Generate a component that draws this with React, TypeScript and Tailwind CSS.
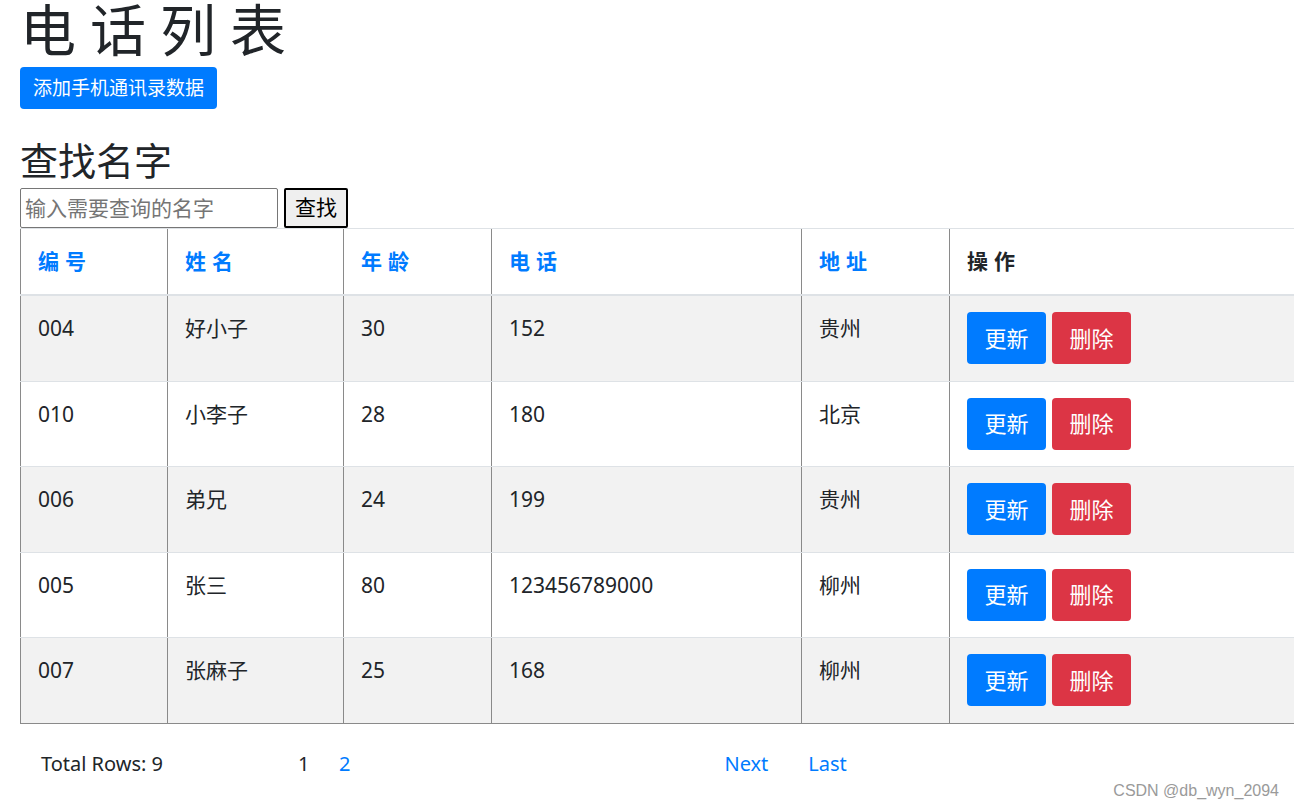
import React from "react";

const FONT = { fontFamily: '"Noto Sans", "Noto Sans CJK SC", sans-serif' };

const rows = [
  { id: "004", name: "好小子", age: "30", phone: "152", addr: "贵州" },
  { id: "010", name: "小李子", age: "28", phone: "180", addr: "北京" },
  { id: "006", name: "弟兄", age: "24", phone: "199", addr: "贵州" },
  { id: "005", name: "张三", age: "80", phone: "123456789000", addr: "柳州" },
  { id: "007", name: "张麻子", age: "25", phone: "168", addr: "柳州" },
];

const COLS = "grid grid-cols-[147px_176px_148px_310px_148px_1fr]";

function HeadCell({ children, last }: { children: React.ReactNode; last?: boolean }) {
  return (
    <div
      className={`border-l border-[#8a8a8a] px-[17px] flex items-center text-[21px] font-bold tracking-[6px] ${
        last ? "text-[#212529]" : "text-[#007bff]"
      }`}
    >
      {children}
    </div>
  );
}

function Cell({ children }: { children: React.ReactNode }) {
  return <div className="border-l border-[#8a8a8a] px-[17px] pt-[18px] text-[21px] leading-[28px] text-[#212529]">{children}</div>;
}

export default function App() {
  return (
    <div className="w-[1294px] h-[812px] overflow-hidden bg-white relative" style={FONT}>
      <div className="pl-5">
        <h1 className="text-[56px] leading-[67px] tracking-[14px] text-[#212529] mt-[-4px]">电话列表</h1>
        <button className="mt-[4px] h-[42px] px-[13px] rounded bg-[#007bff] text-white text-[19px]">
          添加手机通讯录数据
        </button>
        <h2 className="mt-[24px] text-[38px] leading-[55px] text-[#212529]">查找名字</h2>
        <div className="flex items-center gap-[6px]">
          <input
            className="w-[258px] h-[40px] border border-[#767676] rounded-[2px] px-[4px] text-[21px] placeholder:text-[#757575] outline-none"
            placeholder="输入需要查询的名字"
          />
          <button className="h-[40px] px-[9px] border-2 border-black bg-[#efefef] rounded-[2px] text-[21px] text-black">
            查找
          </button>
        </div>
      </div>

      <div className="ml-5 border-t border-[#dee2e6]">
        <div className={`${COLS} h-[67px] border-b-2 border-[#dee2e6]`}>
          <HeadCell>编号</HeadCell>
          <HeadCell>姓名</HeadCell>
          <HeadCell>年龄</HeadCell>
          <HeadCell>电话</HeadCell>
          <HeadCell>地址</HeadCell>
          <HeadCell last>操作</HeadCell>
        </div>
        {rows.map((r, i) => (
          <div
            key={r.id}
            className={`${COLS} h-[85.5px] ${i % 2 === 0 ? "bg-[#f2f2f2]" : "bg-white"} ${
              i < rows.length - 1 ? "border-b border-[#dee2e6]" : "border-b border-[#8a8a8a]"
            }`}
          >
            <Cell>{r.id}</Cell>
            <Cell>{r.name}</Cell>
            <Cell>{r.age}</Cell>
            <Cell>{r.phone}</Cell>
            <Cell>{r.addr}</Cell>
            <div className="border-l border-[#8a8a8a] pl-[17px] pt-[16px] flex items-start gap-[6px]">
              <button className="w-[79px] h-[52px] rounded bg-[#007bff] text-white text-[22px]">更新</button>
              <button className="w-[79px] h-[52px] rounded bg-[#dc3545] text-white text-[22px]">删除</button>
            </div>
          </div>
        ))}
      </div>

      <div className="flex items-center h-[80px] text-[20px] text-[#212529]">
        <span className="ml-[41px] w-[257px]">Total Rows: 9</span>
        <span className="w-[41px]">1</span>
        <span className="text-[#007bff]">2</span>
        <span className="ml-[374px] text-[#007bff]">Next</span>
        <span className="ml-[40px] text-[#007bff]">Last</span>
      </div>

      <div
        className="absolute right-[15px] bottom-[9px] text-[16px] text-[#9a9a9a]"
        style={{ fontFamily: '"Liberation Sans", Arial, sans-serif' }}
      >
        CSDN @db_wyn_2094
      </div>
    </div>
  );
}
